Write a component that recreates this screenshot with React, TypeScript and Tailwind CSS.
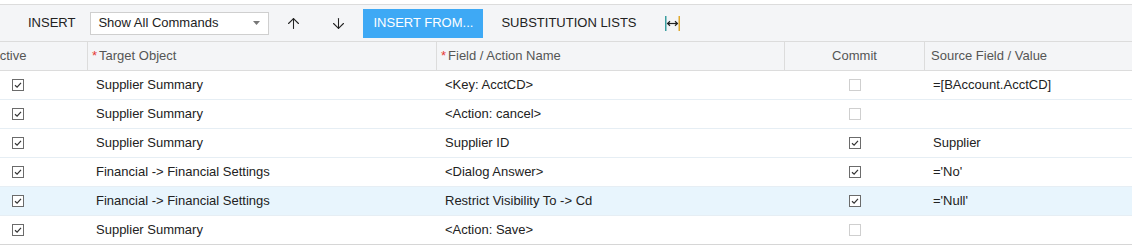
import { ArrowUp, ArrowDown } from 'lucide-react'

type Row = {
  target: string
  field: string
  commit: boolean
  source: string
  selected?: boolean
}

const rows: Row[] = [
  { target: 'Supplier Summary', field: '<Key: AcctCD>', commit: false, source: '=[BAccount.AcctCD]' },
  { target: 'Supplier Summary', field: '<Action: cancel>', commit: false, source: '' },
  { target: 'Supplier Summary', field: 'Supplier ID', commit: true, source: 'Supplier' },
  { target: 'Financial -> Financial Settings', field: '<Dialog Answer>', commit: true, source: "='No'" },
  { target: 'Financial -> Financial Settings', field: 'Restrict Visibility To -> Cd', commit: true, source: "='Null'", selected: true },
  { target: 'Supplier Summary', field: '<Action: Save>', commit: false, source: '' },
]

function Check({ checked }: { checked: boolean }) {
  return (
    <span
      className={
        'flex h-[12px] w-[12px] items-center justify-center border bg-white ' +
        (checked ? 'border-[#6b6b6b]' : 'border-[#cfcfcf]')
      }
    >
      {checked && (
        <svg width="10" height="10" viewBox="0 0 10 10">
          <path d="M2 5.2 L4.1 7.2 L8 2.8" fill="none" stroke="#333" strokeWidth="1.2" />
        </svg>
      )}
    </span>
  )
}

function FitIcon() {
  return (
    <svg width="17" height="15" viewBox="0 0 17 15">
      <rect x="1" y="0" width="1.5" height="15" fill="#3a9ea0" />
      <rect x="14.5" y="0" width="1.5" height="15" fill="#e0a92e" />
      <path d="M3.5 7.5 H13.5" stroke="#222" strokeWidth="1.2" />
      <path d="M6 5.3 L3.6 7.5 L6 9.7" fill="none" stroke="#222" strokeWidth="1.2" />
      <path d="M11 5.3 L13.4 7.5 L11 9.7" fill="none" stroke="#222" strokeWidth="1.2" />
    </svg>
  )
}

export default function App() {
  return (
    <div className="h-[247px] w-[1132px] overflow-hidden bg-white pt-[4px] font-['Liberation_Sans',Arial,sans-serif] text-[13px] text-[#222]">
      {/* Toolbar */}
      <div className="flex h-[37px] items-center border-t border-[#dcdcdc] bg-[#f4f5f7]">
        <button className="ml-[28px] text-[13px] text-[#222]">INSERT</button>
        <div className="ml-[15px] flex h-[23px] w-[179px] items-center justify-between border border-[#cfcfcf] bg-white pl-[7px] pr-[8px]">
          <span>Show All Commands</span>
          <svg width="7" height="4" viewBox="0 0 7 4">
            <path d="M0 0 H7 L3.5 4 Z" fill="#777" />
          </svg>
        </div>
        <ArrowUp className="ml-[16px] h-[17px] w-[17px] text-[#222]" strokeWidth={1.5} />
        <ArrowDown className="ml-[28px] h-[17px] w-[17px] text-[#222]" strokeWidth={1.5} />
        <button className="ml-[16px] h-[29px] w-[120px] bg-[#3ea9f5] text-center text-[13px] text-white">
          INSERT FROM...
        </button>
        <button className="ml-[18px] text-[13px] text-[#222]">SUBSTITUTION LISTS</button>
        <span className="ml-[27px]">
          <FitIcon />
        </span>
      </div>

      {/* Header */}
      <div className="flex h-[30px] items-center border-y border-[#dcdcdc] bg-[#f4f5f7] text-[#555]">
        <div className="flex h-full w-[88px] items-center overflow-hidden border-r border-[#dcdcdc]">
          <span className="ml-[-9px]">Active</span>
        </div>
        <div className="flex h-full w-[349px] items-center border-r border-[#dcdcdc] pl-[4px]">
          <span className="mr-[2px] text-[#e53935]">*</span>Target Object
        </div>
        <div className="flex h-full w-[348px] items-center border-r border-[#dcdcdc] pl-[4px]">
          <span className="mr-[2px] text-[#e53935]">*</span>Field / Action Name
        </div>
        <div className="flex h-full w-[140px] items-center justify-center border-r border-[#dcdcdc]">
          Commit
        </div>
        <div className="flex h-full flex-1 items-center pl-[6px]">Source Field / Value</div>
      </div>

      {/* Rows */}
      {rows.map((r, i) => (
        <div
          key={i}
          className={
            'flex h-[29px] items-center border-b ' +
            (i === rows.length - 1 ? 'border-[#d6d6d6] ' : 'border-[#e6eef4] ') +
            (r.selected ? 'bg-[#e8f5fd]' : 'bg-white')
          }
        >
          <div className="flex w-[88px] items-center pl-[12px]">
            <Check checked />
          </div>
          <div className="w-[349px] pl-[8px]">{r.target}</div>
          <div className="w-[348px] pl-[8px]">{r.field}</div>
          <div className="flex w-[140px] justify-center">
            <Check checked={r.commit} />
          </div>
          <div className="flex-1 pl-[8px]">{r.source}</div>
        </div>
      ))}
    </div>
  )
}
